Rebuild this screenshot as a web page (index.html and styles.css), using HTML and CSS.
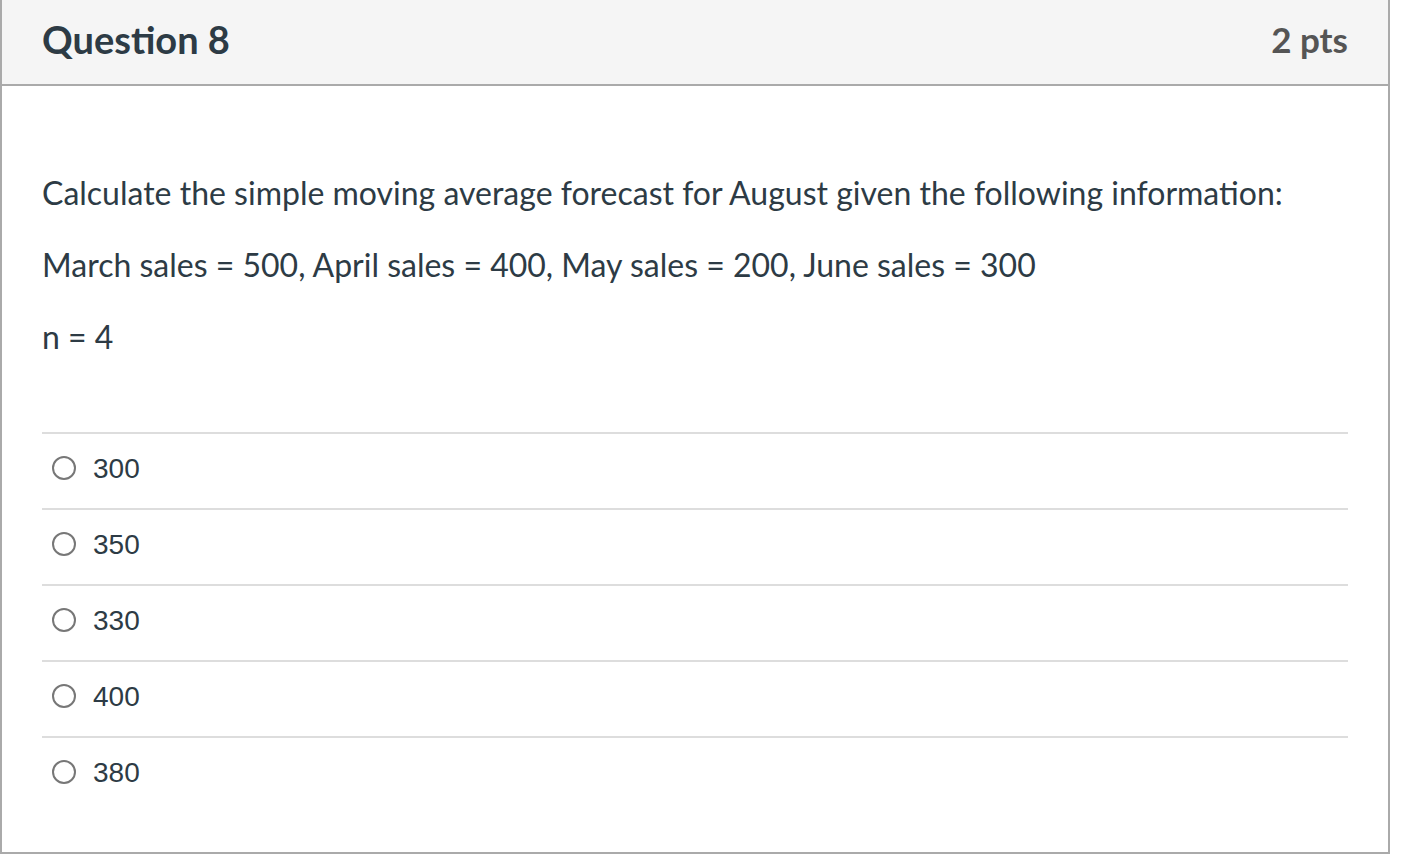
FILE: index.html
```html
<!DOCTYPE html>
<html>
<head>
<meta charset="utf-8">
<link rel="stylesheet" href="styles.css">
</head>
<body>
<div class="question">
  <div class="header">
    <h2 class="title">Question 8</h2>
    <div class="points">2 pts</div>
  </div>
  <div class="content">
    <div class="text">
      <p>Calculate the simple moving average forecast for August given the following information:</p>
      <p>March sales = 500, April sales = 400, May sales = 200, June sales = 300</p>
      <p>n = 4</p>
    </div>
    <div class="answers">
      <div class="answer"><span class="radio"></span><span class="label">300</span></div>
      <div class="answer"><span class="radio"></span><span class="label">350</span></div>
      <div class="answer"><span class="radio"></span><span class="label">330</span></div>
      <div class="answer"><span class="radio"></span><span class="label">400</span></div>
      <div class="answer"><span class="radio"></span><span class="label">380</span></div>
    </div>
  </div>
</div>
</body>
</html>
```
FILE: styles.css
```css
html, body {
  margin: 0;
  padding: 0;
  background: #fff;
}
.question {
  width: 1386px;
  border-left: 2px solid #aaaaaa;
  border-right: 2px solid #aaaaaa;
  border-bottom: 2px solid #aaaaaa;
  font-family: Lato, "Liberation Sans", sans-serif;
  color: #2d3b45;
}
.header {
  height: 84px;
  background: #f5f5f5;
  border-bottom: 2px solid #aaaaaa;
  display: flex;
  align-items: center;
  justify-content: space-between;
  padding: 0 40px;
}
.title {
  margin: -6px 0 0 0;
  font-size: 38px;
  font-weight: 700;
  color: #2d3b45;
}
.points {
  margin-top: -6px;
  font-size: 35px;
  font-weight: 700;
  color: #555555;
}
.content {
  padding: 86px 40px 40px 40px;
}
.text p {
  margin: 0 0 30px 0;
  font-size: 32px;
  line-height: 42px;
}
.text p:last-child {
  margin-bottom: 74px;
}
.answer {
  height: 74px;
  border-top: 2px solid #dddddd;
  display: flex;
  align-items: center;
  padding-left: 10px;
}
.radio {
  width: 20px;
  height: 20px;
  border: 2px solid #777777;
  border-radius: 50%;
  margin-right: 17px;
  margin-top: -6px;
}
.label {
  font-family: "Liberation Sans", Arial, sans-serif;
  font-size: 28px;
  margin-top: -4px;
}
```
